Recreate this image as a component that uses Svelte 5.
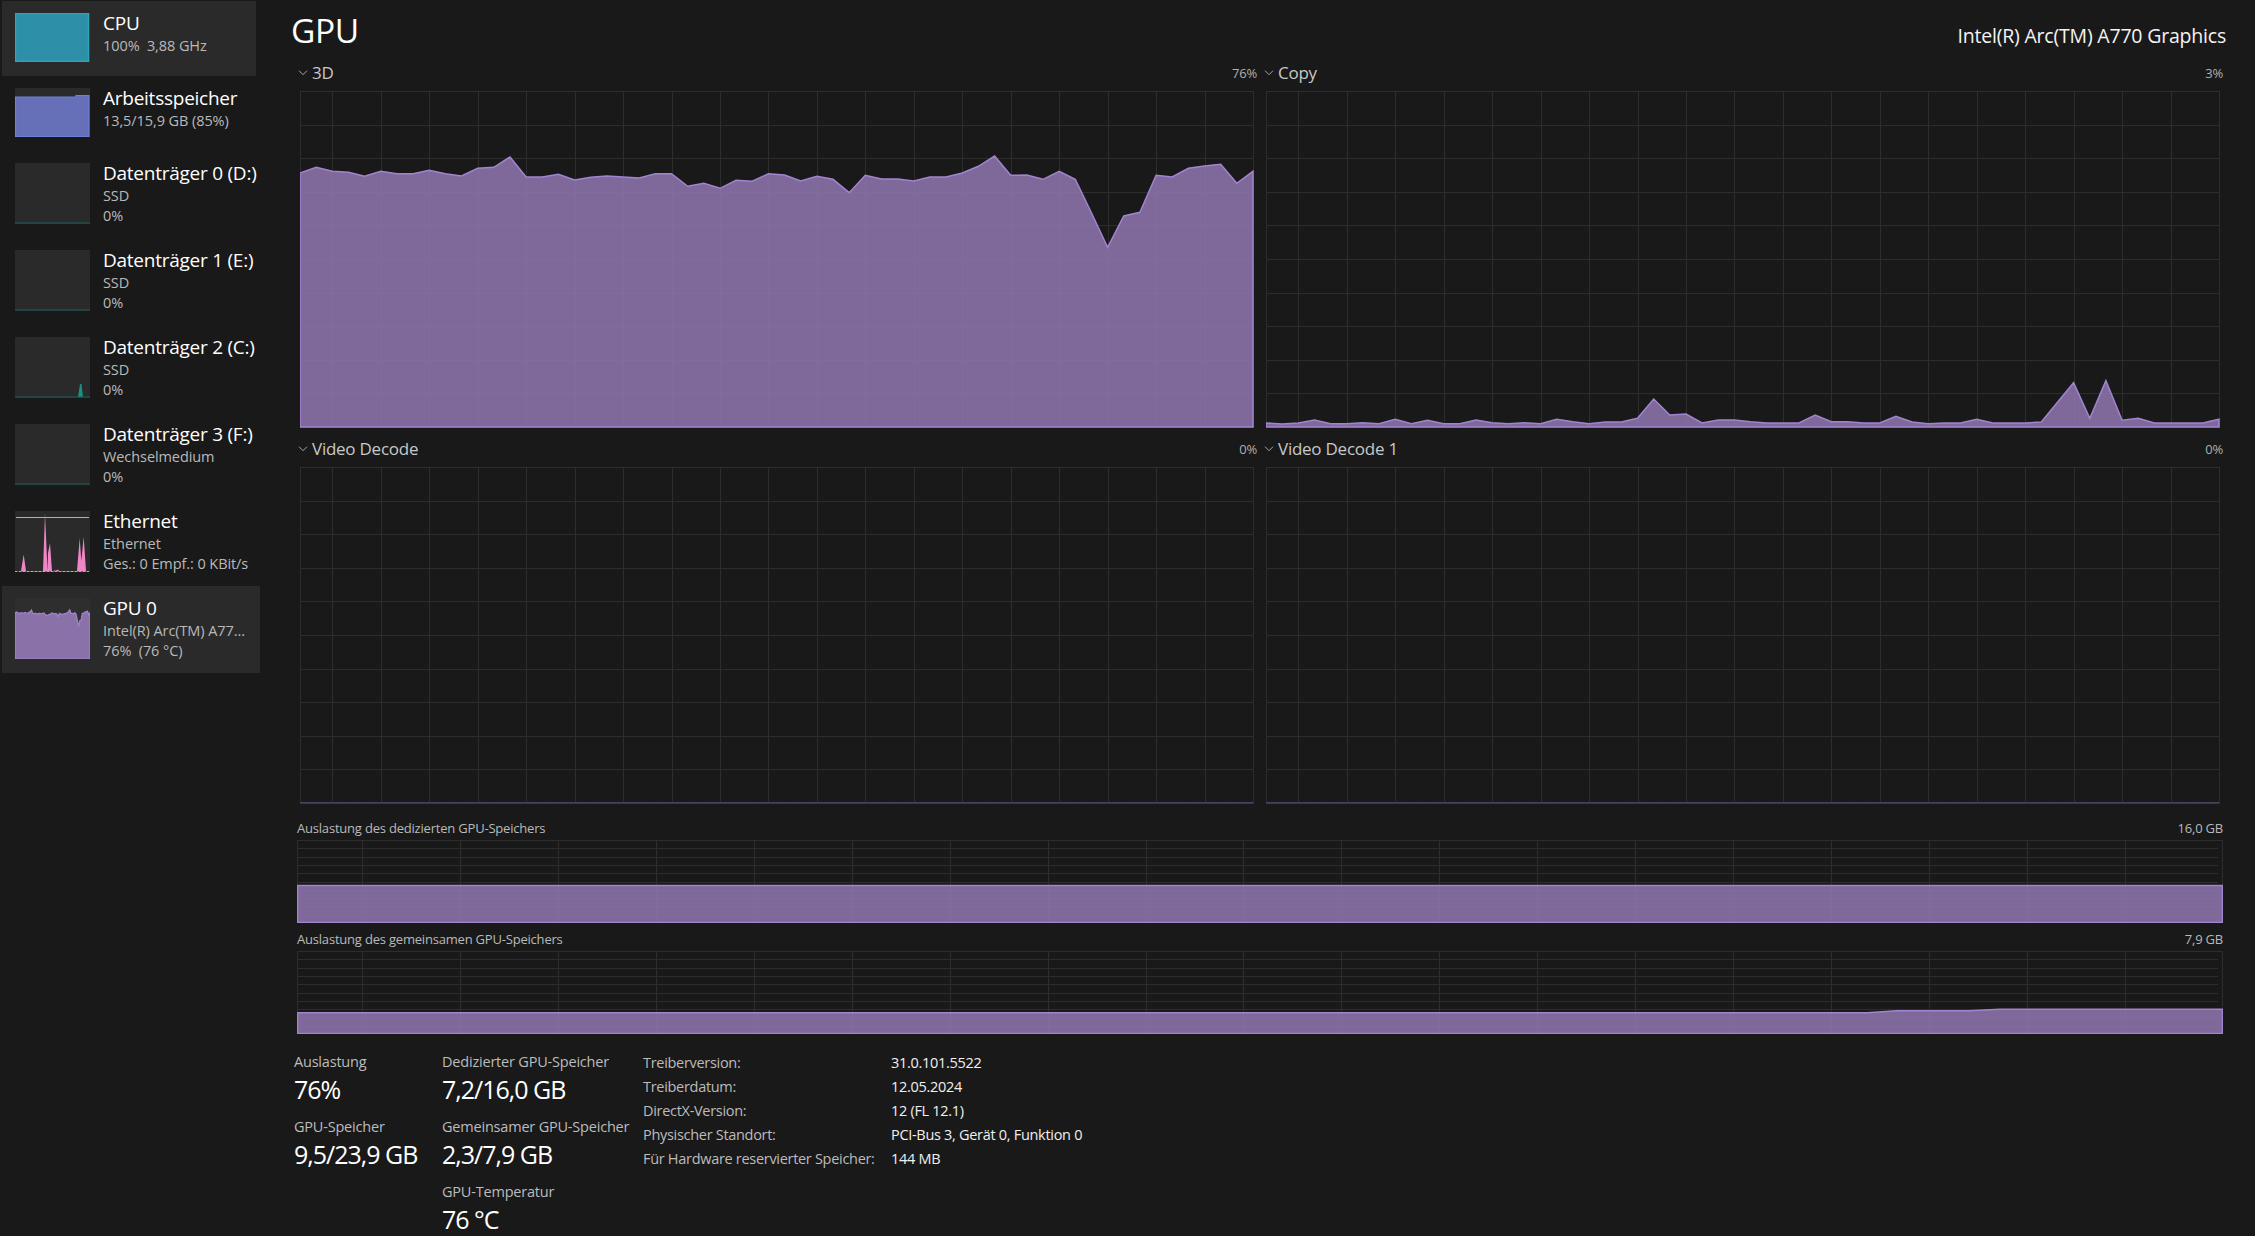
<script>
  const DX = 953 / 59;
  const d3 = [173,167.3,171.3,172.3,176.3,171.3,173.7,173.7,170.3,173.7,176,168.3,167.3,157,177,177,174.3,180,177.3,176,177,178,173.7,173.7,186.3,183.3,188.3,180.3,181.3,173.7,175,181,176.3,179.3,192.7,175.3,179,179,181,177,177,173,166.3,156,175.3,175,179.3,171.3,179.3,213,247.3,216,212.3,175.3,177,168.3,166,164.3,183.3,171.3].map((v) => v - 91);
  const copy = [159,162,159,150,161,161,158,161,148,161,151,161,161,150,158,161,158,161,148,155,161,156,156,145,87,135,132,159,150,150,155,159,159,159,135,155,155,159,159,139,156,161,159,159,148,159,159,159,156,97,38,145,32,151,145,159,159,159,159,148].map((z) => 279 + z / 3);
  const zero = Array(60).fill(335.5);

  const hLines = Array.from({ length: 9 }, (_, k) => Math.round(33.6 * (k + 1)) + 0.5);
  const vLines = Array.from({ length: 19 }, (_, k) => Math.round(DX * (2 + 3 * k)) + 0.5);
  const mhLines = Array.from({ length: 9 }, (_, k) => Math.round(8.3 * (k + 1)) + 0.5);
  const mvLines = Array.from({ length: 19 }, (_, k) => Math.round(65.3 + 97.9 * k) + 0.5);

  const area = (vals, w = DX, h = 336, sy = 1) =>
    `0,${h} ` + vals.map((v, i) => `${(i * w).toFixed(1)},${(v * sy).toFixed(1)}`).join(' ') + ` ${(59 * w).toFixed(1)},${h}`;

  const sharedTop = '0.5,82.5 0.5,61.7 1570,61.7 1600,59.7 1672,59.7 1703,58.3 1925.5,58.3 1925.5,82.5';

  const gpuThumb = area(d3, 75 / 59, 61, 61 / 336);

  const charts = [
    [
      { name: '3D', val: '76%', pts: area(d3), empty: false },
      { name: 'Copy', val: '3%', pts: area(copy), empty: false }
    ],
    [
      { name: 'Video Decode', val: '0%', pts: area(zero), empty: true },
      { name: 'Video Decode 1', val: '0%', pts: area(zero), empty: true }
    ]
  ];

  const disks = [
    { name: 'Datenträger 0 (D:)', type: 'SSD', spike: false },
    { name: 'Datenträger 1 (E:)', type: 'SSD', spike: false },
    { name: 'Datenträger 2 (C:)', type: 'SSD', spike: true },
    { name: 'Datenträger 3 (F:)', type: 'Wechselmedium', spike: false }
  ];

  const info = [
    ['Treiberversion:', '31.0.101.5522'],
    ['Treiberdatum:', '12.05.2024'],
    ['DirectX-Version:', '12 (FL 12.1)'],
    ['Physischer Standort:', 'PCI-Bus 3, Gerät 0, Funktion 0'],
    ['Für Hardware reservierter Speicher:', '144 MB']
  ];
</script>

<div class="app">
  <aside class="side">
    <div class="row short sel">
      <svg class="thumb th49" width="75" height="49" viewBox="0 0 75 49">
        <rect class="tbg" width="75" height="49" />
        <rect x="0.5" y="0.5" width="73" height="48" fill="#2d8fa8" stroke="#2ea5b8" stroke-width="1.5" />
      </svg>
      <div class="txt">
        <div class="t">CPU</div>
        <div class="s">100%&nbsp; 3,88 GHz</div>
      </div>
    </div>
    <div class="row short">
      <svg class="thumb th49" width="75" height="49" viewBox="0 0 75 49">
        <rect class="tbg" width="75" height="49" />
        <polygon points="0.5,48.5 0.5,9 61,9 61,7.5 74,7.5 74,48.5" fill="#6670b8" stroke="#6f80d8" stroke-width="1.2" />
      </svg>
      <div class="txt">
        <div class="t">Arbeitsspeicher</div>
        <div class="s">13,5/15,9 GB (85%)</div>
      </div>
    </div>
    {#each disks as d}
      <div class="row">
        <svg class="thumb" width="75" height="61" viewBox="0 0 75 61">
          <rect class="tbg" width="75" height="61" />
          {#if d.spike}
            <polygon points="63,60 65,47 66.5,47 68,60" fill="#1d8f85" />
          {/if}
          <line x1="0" x2="75" y1="60" y2="60" stroke="#1f5f5f" stroke-width="1.2" />
        </svg>
        <div class="txt">
          <div class="t">{d.name}</div>
          <div class="s">{d.type}</div>
          <div class="s">0%</div>
        </div>
      </div>
    {/each}
    <div class="row">
      <svg class="thumb" width="75" height="61" viewBox="0 0 75 61">
        <rect class="tbg" width="75" height="61" />
        <polygon points="0,60.5 6,60 8.7,43.5 11,60 28,60 30,2 32.5,60 33,42 35,32 37,60 39,60 39.5,58.5 40,60 43,58.5 44,60 62,60 64.7,27 66.3,50 68.7,25.7 71,60 75,60.5" fill="#ee87c6" />
        <line x1="1" x2="74" y1="6.5" y2="6.5" stroke="#f08ccb" stroke-width="1.2" />
        <line x1="0" x2="75" y1="60.5" y2="60.5" stroke="#f08ccb" stroke-width="1" stroke-dasharray="2 2" />
      </svg>
      <div class="txt">
        <div class="t">Ethernet</div>
        <div class="s">Ethernet</div>
        <div class="s">Ges.: 0 Empf.: 0 KBit/s</div>
      </div>
    </div>
    <div class="row wide sel">
      <svg class="thumb" width="75" height="61" viewBox="0 0 75 61">
        <rect class="tbg" width="75" height="61" />
        <polygon points={gpuThumb} fill="#8a72a8" stroke="#a184cf" stroke-width="1.2" />
      </svg>
      <div class="txt">
        <div class="t">GPU 0</div>
        <div class="s">Intel(R) Arc(TM) A77...</div>
        <div class="s">76%&nbsp; (76 °C)</div>
      </div>
    </div>
  </aside>

  <main class="main">
    <header class="head">
      <h1>GPU</h1>
      <div class="device">Intel(R) Arc(TM) A770 Graphics</div>
    </header>

    {#each charts as line}
      <div class="pair">
        {#each line as c}
          <section class="cell">
            <div class="cap">
              <span class="nm">
                <svg class="chev" width="10" height="6" viewBox="0 0 10 6"><polyline points="1,0.7 5,4.7 9,0.7" /></svg>
                {c.name}
              </span>
              <span class="pct">{c.val}</span>
            </div>
            <svg class="big" width="954" height="337" viewBox="0 0 954 337">
              {#each hLines as y}<line class="g" x1="0" x2="953" y1={y} y2={y} />{/each}
              {#each vLines as x}<line class="g" x1={x} x2={x} y1="0" y2="336" />{/each}
              <rect class="g f" x="0.5" y="0.5" width="953" height="336" />
              <polygon class={c.empty ? 'zero' : 'data'} points={c.pts} />
            </svg>
          </section>
        {/each}
      </div>
    {/each}

    <div class="mcap first"><span>Auslastung des dedizierten GPU-Speichers</span><span>16,0 GB</span></div>
    <svg class="mem" width="1926" height="83" viewBox="0 0 1926 83">
      {#each mhLines as y}<line class="g" x1="0" x2="1921" y1={y} y2={y} />{/each}
      {#each mvLines as x}<line class="g" x1={x} x2={x} y1="0" y2="83" />{/each}
      <rect class="g f" x="0.5" y="0.5" width="1925" height="82" />
      <rect class="data" x="0.5" y="45.5" width="1925" height="37" />
    </svg>
    <div class="mcap"><span>Auslastung des gemeinsamen GPU-Speichers</span><span>7,9 GB</span></div>
    <svg class="mem" width="1926" height="83" viewBox="0 0 1926 83">
      {#each mhLines as y}<line class="g" x1="0" x2="1921" y1={y} y2={y} />{/each}
      {#each mvLines as x}<line class="g" x1={x} x2={x} y1="0" y2="83" />{/each}
      <rect class="g f" x="0.5" y="0.5" width="1925" height="82" />
      <polygon class="data" points={sharedTop} />
    </svg>

    <div class="stats">
      <div class="col c1">
        <div class="stat"><div class="lb">Auslastung</div><div class="vl">76%</div></div>
        <div class="stat"><div class="lb">GPU-Speicher</div><div class="vl">9,5/23,9 GB</div></div>
      </div>
      <div class="col c2">
        <div class="stat"><div class="lb">Dedizierter GPU-Speicher</div><div class="vl">7,2/16,0 GB</div></div>
        <div class="stat"><div class="lb">Gemeinsamer GPU-Speicher</div><div class="vl">2,3/7,9 GB</div></div>
        <div class="stat"><div class="lb">GPU-Temperatur</div><div class="vl">76 °C</div></div>
      </div>
      <div class="table">
        {#each info as [k, v]}
          <div class="k">{k}</div>
          <div class="v">{v}</div>
        {/each}
      </div>
    </div>
  </main>
</div>

<style>
  :global(body) {
    margin: 0;
    background: #191919;
  }
  .app {
    display: flex;
    width: 2255px;
    height: 1236px;
    overflow: hidden;
    background: #191919;
    color: #fff;
    font-family: "Open Sans", "Noto Sans", sans-serif;
  }
  .side {
    flex: 0 0 291px;
    padding-top: 1px;
    box-sizing: border-box;
    display: flex;
    flex-direction: column;
    align-items: flex-start;
  }
  .row {
    display: flex;
    box-sizing: border-box;
    width: 254px;
    height: 87px;
    margin-left: 2px;
    padding: 12px 0 0 13px;
    gap: 13px;
    white-space: nowrap;
  }
  .row.short { height: 75px; }
  .row.wide { width: 258px; }
  .row.sel { background: #2a2a2a; }
  .thumb { flex: none; display: block; }
  .tbg { fill: #2a2a2a; }
  .row.sel .tbg { fill: #2e2e2e; }
  .txt {
    margin-top: -2px;
  }
  .t {
    font-size: 19px;
    line-height: 24px;
    letter-spacing: -0.25px;
    color: #fff;
    height: 25px;
  }
  .s {
    font-size: 14.5px;
    line-height: 20px;
    letter-spacing: -0.08px;
    color: #b9b9b9;
  }
  .main {
    flex: 1;
    min-width: 0;
  }
  .head {
    display: flex;
    justify-content: space-between;
    height: 60px;
    padding-right: 29px;
  }
  h1 {
    margin: 0;
    font-size: 33.5px;
    font-weight: 400;
    line-height: 60px;
    letter-spacing: -0.4px;
    color: #fff;
  }
  .device {
    font-size: 19.5px;
    line-height: 72px;
    letter-spacing: -0.2px;
    color: #f4f4f4;
  }
  .pair {
    display: flex;
    gap: 6px;
    margin-left: 6px;
    width: 1926px;
  }
  .pair + .pair { margin-top: 9px; }
  .cell { width: 960px; }
  .cap {
    display: flex;
    justify-content: space-between;
    align-items: center;
    height: 25px;
    margin-bottom: 6px;
  }
  .nm {
    display: flex;
    align-items: center;
    gap: 4px;
    font-size: 17px;
    letter-spacing: -0.25px;
    color: #c8c8c8;
    padding-left: 1px;
  }
  .chev polyline {
    fill: none;
    stroke: #a8a8a8;
    stroke-width: 1;
  }
  .pct {
    font-size: 13px;
    letter-spacing: -0.2px;
    color: #b0b0b0;
  }
  .big {
    display: block;
    margin: 0 0 -1px 3px;
  }
  .mem {
    display: block;
    margin-left: 6px;
  }
  .g {
    stroke: #2d2d2d;
    stroke-width: 1;
    shape-rendering: crispEdges;
  }
  .f { fill: none; }
  .data {
    fill: rgba(148, 122, 180, 0.83);
    stroke: #a184cf;
    stroke-width: 1.5;
  }
  .zero {
    fill: none;
    stroke: #4d4160;
    stroke-width: 1;
  }
  .mcap {
    display: flex;
    justify-content: space-between;
    align-items: center;
    height: 22px;
    margin: 5px 0 1px 6px;
    width: 1926px;
    font-size: 13px;
    letter-spacing: -0.2px;
    color: #b9b9b9;
  }
  .mcap.first { margin-top: 14px; }
  .stats {
    display: flex;
    margin: 16px 0 0 3px;
  }
  .col { padding-top: 2px; }
  .c1 { width: 148px; }
  .c2 { width: 201px; }
  .stat { height: 65px; }
  .stat:last-child { height: auto; }
  .lb {
    font-size: 14.5px;
    line-height: 20px;
    letter-spacing: -0.2px;
    color: #bcbcbc;
    white-space: nowrap;
  }
  .vl {
    margin-top: 3px;
    font-size: 25px;
    line-height: 28px;
    letter-spacing: -1px;
    color: #fff;
    white-space: nowrap;
  }
  .table {
    display: grid;
    grid-template-columns: 248px auto;
    grid-auto-rows: 24px;
    align-content: start;
    align-items: center;
    font-size: 14.5px;
    letter-spacing: -0.3px;
    white-space: nowrap;
  }
  .k { color: #bcbcbc; }
  .v { color: #f0f0f0; }
</style>
